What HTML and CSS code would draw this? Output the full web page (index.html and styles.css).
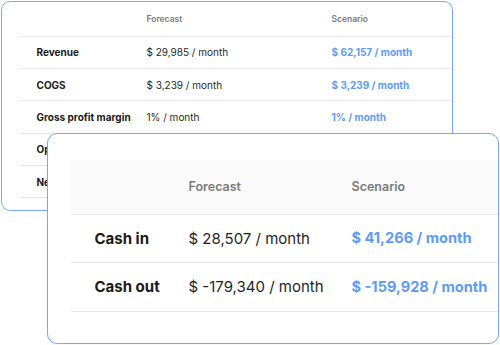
FILE: index.html
```html
<!DOCTYPE html>
<html>
<head>
<meta charset="utf-8">
<link rel="stylesheet" href="styles.css">
</head>
<body>
<div class="card card-back">
  <div class="tbl tbl-small">
    <div class="row head"><div></div><div>Forecast</div><div>Scenario</div></div>
    <div class="row"><div class="lbl">Revenue</div><div>$ 29,985 / month</div><div class="sc">$ 62,157 / month</div></div>
    <div class="row"><div class="lbl">COGS</div><div>$ 3,239 / month</div><div class="sc">$ 3,239 / month</div></div>
    <div class="row"><div class="lbl">Gross profit margin</div><div>1% / month</div><div class="sc">1% / month</div></div>
    <div class="row"><div class="lbl">Operating expenses</div><div></div><div></div></div>
    <div class="row"><div class="lbl">Net profit</div><div></div><div></div></div>
  </div>
</div>
<div class="card card-front">
  <div class="tbl tbl-big">
    <div class="row head"><div></div><div>Forecast</div><div>Scenario</div></div>
    <div class="row"><div class="lbl">Cash in</div><div>$ 28,507 / month</div><div class="sc">$ 41,266 / month</div></div>
    <div class="row"><div class="lbl">Cash out</div><div>$ -179,340 / month</div><div class="sc">$ -159,928 / month</div></div>
  </div>
</div>
</body>
</html>
```
FILE: styles.css
```css
html, body {
  margin: 0;
  padding: 0;
  background: #ffffff;
}
body {
  width: 500px;
  height: 345px;
  overflow: hidden;
  position: relative;
  font-family: Inter, "Open Sans", sans-serif;
  color: #1f1f1f;
}
.card {
  box-sizing: border-box;
  border: 1.5px solid #7aa8f6;
  background: #ffffff;
  overflow: hidden;
}
.card-back {
  margin: 1px 0 0 1px;
  width: 452px;
  height: 210px;
  border-radius: 9px;
}
.card-front {
  position: absolute;
  left: 47px;
  top: 133px;
  width: 452px;
  height: 211px;
  border-radius: 10px;
  box-shadow: 0 2px 6px rgba(0,0,0,0.04);
}
.tbl {
  display: flex;
  flex-direction: column;
}
.row {
  display: grid;
  align-items: center;
  box-sizing: border-box;
  border-bottom: 1px solid #e8e8e8;
  white-space: nowrap;
}
.head {
  color: #7b7b7b;
  font-weight: 600;
}
.lbl {
  font-weight: 700;
  color: #1a1a1a;
}
.sc {
  color: #5c9cf7;
  font-weight: 700;
}
.tbl-small {
  margin-left: 17.5px;
  font-size: 10px;
}
.tbl-small .row {
  grid-template-columns: 127px 185px 1fr;
  height: 32.4px;
}
.tbl-small .row > div:first-child {
  padding-left: 17px;
}
.tbl-small .head {
  height: 34.5px;
  font-size: 8.5px;
}
.tbl-big {
  margin: 25.5px 0 0 22.5px;
  width: 440px;
  font-size: 15px;
}
.tbl-big .row {
  grid-template-columns: 118px 163px 1fr;
  height: 48.5px;
}
.tbl-big .row > div:first-child {
  padding-left: 24px;
}
.tbl-big .sc {
  font-size: 14.6px;
}
.tbl-big .head {
  height: 55px;
  background: #fafafa;
  font-size: 12.5px;
}
```
